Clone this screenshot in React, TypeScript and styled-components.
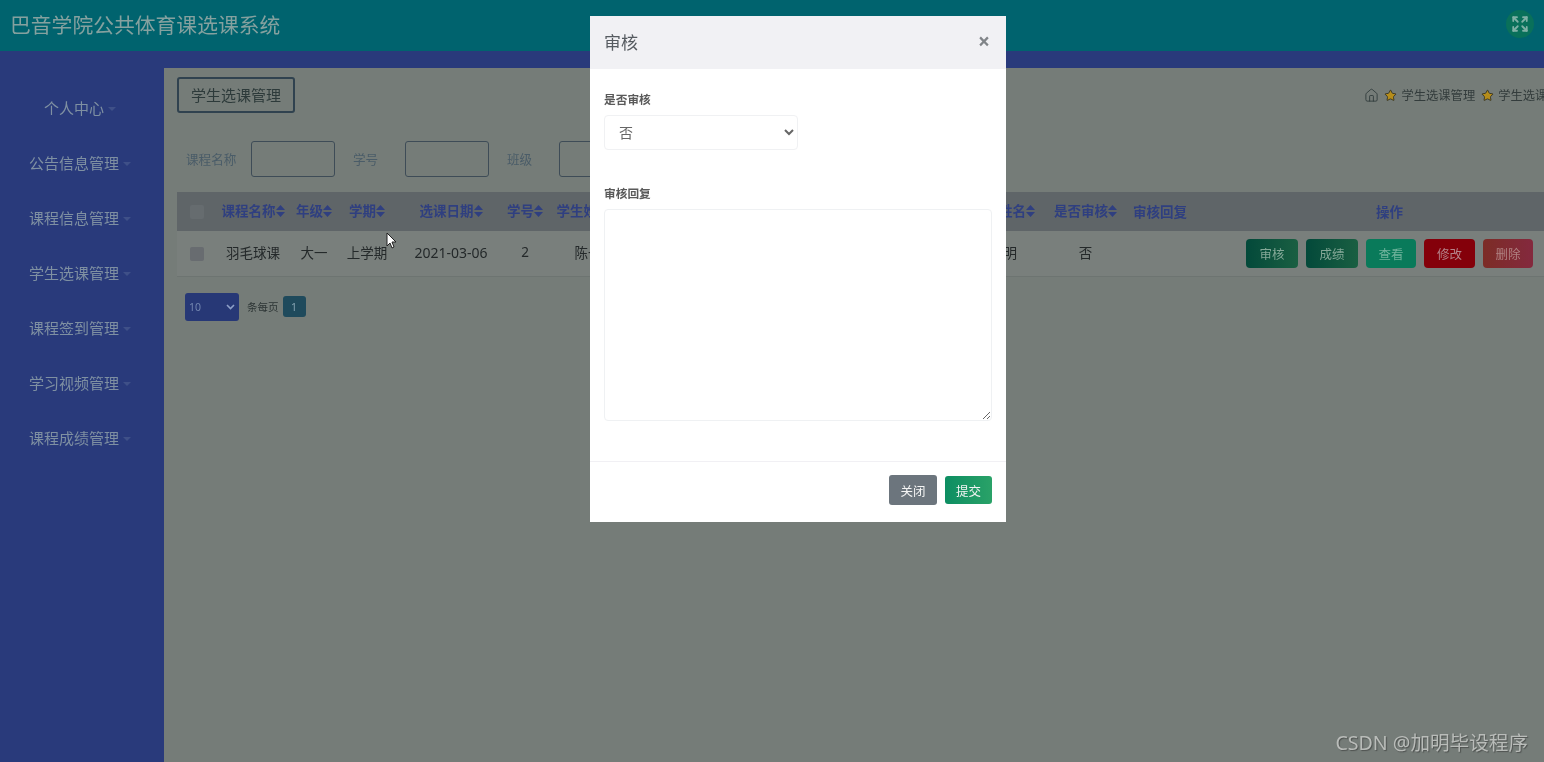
import React from "react";
import styled, { createGlobalStyle } from "styled-components";
import { Expand, House, Star } from "lucide-react";

const Global = createGlobalStyle`
  html, body { margin: 0; padding: 0; height: 100%; overflow: hidden; }
  body { font-family: "Noto Sans", "Noto Sans CJK SC", sans-serif; background: #293a7b; }
  * { box-sizing: border-box; }
`;

const Page = styled.div`
  position: relative;
  width: 1544px;
  height: 762px;
  overflow: hidden;
  display: flex;
  flex-direction: column;
  background: #293a7b;
  filter: blur(0.35px);
`;

const Header = styled.header`
  flex: 0 0 51px;
  display: flex;
  align-items: center;
  justify-content: space-between;
  padding: 0 10px 4px;
  background: #00636e;
`;

const Brand = styled.h1`
  margin: 0;
  font-size: 20.8px;
  font-weight: 400;
  color: #85a19f;
`;

const FullBtn = styled.div`
  width: 28px;
  height: 28px;
  border-radius: 50%;
  background: #09705a;
  color: #7fb0a5;
  display: flex;
  align-items: center;
  justify-content: center;
`;

const Body = styled.div`
  flex: 1;
  display: flex;
  min-height: 0;
`;

const Sidebar = styled.nav`
  flex: 0 0 164px;
  padding: 29px 4px 0 0;
  display: flex;
  flex-direction: column;
`;

const NavItem = styled.div`
  height: 55px;
  display: flex;
  align-items: center;
  justify-content: center;
  gap: 4px;
  font-size: 15px;
  color: #7f90a2;
`;

const Caret = styled.span`
  width: 0;
  height: 0;
  margin-top: 2px;
  border-left: 4px solid transparent;
  border-right: 4px solid transparent;
  border-top: 4px solid #3f5088;
`;

const Main = styled.main`
  flex: 1;
  min-width: 0;
  margin-top: 17px;
  padding: 9px 0 0 13px;
  background: #757c78;
  overflow: hidden;
`;

const Inner = styled.div`
  width: 1408px;
`;

const TitleRow = styled.div`
  display: flex;
  align-items: center;
  justify-content: space-between;
  padding-right: 7px;
`;

const TitleTag = styled.div`
  width: 118px;
  height: 36px;
  padding-bottom: 2px;
  border: 2px solid #30424f;
  border-radius: 3px;
  display: flex;
  align-items: center;
  justify-content: center;
  font-size: 15px;
  color: #2d3a3a;
`;

const Crumbs = styled.div`
  display: flex;
  align-items: center;
  font-size: 12.3px;
  color: #333c3c;
`;

const HomeIcon = styled(House)`
  margin-right: 5px;
  color: #2f3a3a;
`;

const CrumbStar = styled(Star)`
  margin-right: 4px;
  color: #2b2a1c;
  fill: #b58d1b;
`;

const CrumbText = styled.span`
  margin-right: 6px;
`;

const SearchRow = styled.div`
  display: flex;
  align-items: center;
  gap: 18px;
  margin-top: 28px;
  padding-left: 9px;
`;

const Field = styled.div`
  display: flex;
  align-items: center;
`;

const SearchLabel = styled.label<{ $w: number }>`
  width: ${(p) => p.$w}px;
  padding-bottom: 2px;
  font-size: 12.6px;
  color: #4a5c68;
`;

const SearchInput = styled.input`
  width: 84px;
  height: 36px;
  border: 1.5px solid #3e4c57;
  border-radius: 3px;
  background: transparent;
  outline: none;
`;

const Table = styled.table`
  width: 1408px;
  margin-top: 15px;
  table-layout: fixed;
  border-collapse: collapse;
`;

const Th = styled.th`
  height: 39px;
  padding: 0 0 2px;
  background: #5f6568;
  font-size: 13.5px;
  font-weight: 700;
  color: #2f3f80;
  white-space: nowrap;
`;

const SortMark = styled.span`
  display: inline-block;
  vertical-align: middle;
`;

const Td = styled.td<{ $wide?: boolean }>`
  height: 45px;
  padding: 0 0 2px;
  background: #797f7c;
  border-bottom: 1px solid #6d7471;
  text-align: center;
  font-size: ${(p) => (p.$wide ? 14 : 13.5)}px;
  color: #24292a;
  white-space: nowrap;
`;

const Check = styled.span<{ $dim?: boolean }>`
  display: inline-block;
  width: 14px;
  height: 14px;
  border-radius: 2px;
  background: ${(p) => (p.$dim ? "#666c6f" : "#686c70")};
  vertical-align: middle;
`;

const Actions = styled.div`
  display: flex;
  justify-content: center;
  gap: 8px;
  padding-top: 3px;
`;

const ActionBtn = styled.button<{ $bg: string; $w: number; $fg: string }>`
  width: ${(p) => p.$w}px;
  height: 29px;
  border: 0;
  border-radius: 4px;
  padding: 0;
  background: ${(p) => p.$bg};
  color: ${(p) => p.$fg};
  font-family: inherit;
  font-size: 12.5px;
`;

const Pager = styled.div`
  display: flex;
  align-items: center;
  margin: 16px 0 0 8px;
`;

const SizeSelect = styled.div`
  width: 54px;
  height: 28px;
  padding: 0 4px;
  border-radius: 3px;
  background: #273876;
  color: #7386b0;
  font-size: 10.5px;
  display: flex;
  align-items: center;
  justify-content: space-between;
`;

const PagerText = styled.span`
  margin: 0 4px 0 8px;
  font-size: 10.5px;
  color: #2d3535;
`;

const PageNum = styled.span`
  width: 23px;
  height: 21px;
  border-radius: 3px;
  background: #1f4a5c;
  color: #85a3b2;
  font-size: 10.5px;
  display: flex;
  align-items: center;
  justify-content: center;
`;

const Modal = styled.section`
  position: absolute;
  left: 590px;
  top: 16px;
  width: 416px;
  height: 506px;
  background: #fff;
  display: flex;
  flex-direction: column;
`;

const ModalHead = styled.div`
  flex: 0 0 53px;
  padding: 0 16px 0 14px;
  background: #f1f1f4;
  display: flex;
  align-items: center;
  justify-content: space-between;
`;

const ModalTitle = styled.h2`
  margin: -2px 0 0;
  font-size: 17px;
  font-weight: 400;
  color: #565b60;
`;

const CloseX = styled.span`
  font-size: 21px;
  line-height: 1;
  font-weight: 700;
  color: #808488;
  margin-top: -3px;
`;

const ModalBody = styled.div`
  flex: 1;
  padding: 22px 14px 0;
  display: flex;
  flex-direction: column;
`;

const FormLabel = styled.label`
  height: 18px;
  margin-bottom: 6px;
  font-size: 11.7px;
  font-weight: 700;
  line-height: 17px;
  color: #5a5a5a;
`;

const FormSelect = styled.select`
  width: 194px;
  height: 35px;
  margin-bottom: 35px;
  padding-left: 10px;
  border: 1px solid #f0f1f3;
  border-radius: 4px;
  background: #fff;
  font-family: inherit;
  font-size: 14px;
  color: #666;
  outline: none;
`;

const FormArea = styled.textarea`
  width: 388px;
  height: 212px;
  border: 1px solid #eff1f3;
  border-radius: 4px;
  outline: none;
`;

const ModalFoot = styled.div`
  flex: 0 0 61px;
  padding: 0 14px 4px 0;
  border-top: 1px solid #f1f0f4;
  display: flex;
  align-items: center;
  justify-content: flex-end;
  gap: 8px;
`;

const FootBtn = styled.button<{ $bg: string; $w: number; $h: number }>`
  width: ${(p) => p.$w}px;
  height: ${(p) => p.$h}px;
  border: 0;
  border-radius: 3px;
  padding: 0;
  background: ${(p) => p.$bg};
  color: #f4f4f4;
  font-family: inherit;
  font-size: 12.5px;
`;

const Pointer = styled.svg`
  position: absolute;
  left: 386px;
  top: 232px;
`;

const Watermark = styled.div`
  position: absolute;
  right: 16px;
  top: 729px;
  font-size: 19.6px;
  line-height: 27px;
  color: #b9bcb9;
  text-shadow: 1px 1px 1px rgba(40, 40, 40, 0.5);
`;

const menu = ["个人中心", "公告信息管理", "课程信息管理", "学生选课管理", "课程签到管理", "学习视频管理", "课程成绩管理"];

const columns: { label: string; width: number; sort: boolean }[] = [
  { label: "课程名称", width: 74, sort: true },
  { label: "年级", width: 48, sort: true },
  { label: "学期", width: 58, sort: true },
  { label: "选课日期", width: 110, sort: true },
  { label: "学号", width: 38, sort: true },
  { label: "学生姓名", width: 88, sort: true },
  { label: "手机号码", width: 110, sort: true },
  { label: "班级", width: 110, sort: true },
  { label: "教师工号", width: 110, sort: true },
  { label: "教师姓名", width: 83, sort: true },
  { label: "是否审核", width: 81, sort: true },
  { label: "审核回复", width: 68, sort: false },
  { label: "操作", width: 391, sort: false },
];

const cells = ["羽毛球课", "大一", "上学期", "2021-03-06", "2", "陈一", "13800000000", "一班", "1", "李明", "否", ""];

const buttons = [
  { t: "审核", w: 52, bg: "linear-gradient(90deg,#03493a,#1a5f42)", fg: "#84a897" },
  { t: "成绩", w: 52, bg: "linear-gradient(90deg,#03493a,#1a5f42)", fg: "#84a897" },
  { t: "查看", w: 50, bg: "#097a5a", fg: "#70b39c" },
  { t: "修改", w: 51, bg: "#84000a", fg: "#b5838a" },
  { t: "删除", w: 50, bg: "linear-gradient(90deg,#7c2c26,#84293e)", fg: "#b08282" },
];

const Sort = () => (
  <SortMark>
    <svg width="9" height="12" viewBox="0 0 9 12" fill="#2f3f80">
      <path d="M4.5 0 9 5H0zM4.5 12 0 7h9z" />
    </svg>
  </SortMark>
);

export default function App() {
  return (
    <Page>
      <Global />
      <Header>
        <Brand>巴音学院公共体育课选课系统</Brand>
        <FullBtn>
          <Expand size={18} strokeWidth={2.4} />
        </FullBtn>
      </Header>
      <Body>
        <Sidebar>
          {menu.map((m) => (
            <NavItem key={m}>
              {m}
              <Caret />
            </NavItem>
          ))}
        </Sidebar>
        <Main>
          <Inner>
            <TitleRow>
              <TitleTag>学生选课管理</TitleTag>
              <Crumbs>
                <HomeIcon size={15} strokeWidth={1.4} />
                <CrumbStar size={13} strokeWidth={1.5} />
                <CrumbText>学生选课管理</CrumbText>
                <CrumbStar size={13} strokeWidth={1.5} />
                <CrumbText>学生选课管理</CrumbText>
              </Crumbs>
            </TitleRow>
            <SearchRow>
              <Field>
                <SearchLabel $w={65}>课程名称</SearchLabel>
                <SearchInput />
              </Field>
              <Field>
                <SearchLabel $w={52}>学号</SearchLabel>
                <SearchInput />
              </Field>
              <Field>
                <SearchLabel $w={52}>班级</SearchLabel>
                <SearchInput />
              </Field>
            </SearchRow>
            <Table>
              <colgroup>
                <col style={{ width: 39 }} />
                {columns.map((c) => (
                  <col key={c.label} style={{ width: c.width }} />
                ))}
              </colgroup>
              <thead>
                <tr>
                  <Th>
                    <Check $dim />
                  </Th>
                  {columns.map((c) => (
                    <Th key={c.label}>
                      {c.label}
                      {c.sort && <Sort />}
                    </Th>
                  ))}
                </tr>
              </thead>
              <tbody>
                <tr>
                  <Td>
                    <Check />
                  </Td>
                  {cells.map((c, i) => (
                    <Td key={i} $wide={i === 3}>{c}</Td>
                  ))}
                  <Td>
                    <Actions>
                      {buttons.map((b) => (
                        <ActionBtn key={b.t} $bg={b.bg} $w={b.w} $fg={b.fg}>
                          {b.t}
                        </ActionBtn>
                      ))}
                    </Actions>
                  </Td>
                </tr>
              </tbody>
            </Table>
            <Pager>
              <SizeSelect>
                10
                <svg width="9" height="6" viewBox="0 0 9 6" fill="none" stroke="#8ea0c8" strokeWidth="1.6">
                  <path d="M1 1l3.5 3.5L8 1" />
                </svg>
              </SizeSelect>
              <PagerText>条每页</PagerText>
              <PageNum>1</PageNum>
            </Pager>
          </Inner>
        </Main>
      </Body>
      <Pointer width="12" height="17" viewBox="0 0 12 17">
        <path d="M1 1v13l3-3 2 5 2-1-2-5h4z" fill="#fff" stroke="#222" strokeWidth="1" />
      </Pointer>
      <Modal>
        <ModalHead>
          <ModalTitle>审核</ModalTitle>
          <CloseX>×</CloseX>
        </ModalHead>
        <ModalBody>
          <FormLabel>是否审核</FormLabel>
          <FormSelect defaultValue="否">
            <option>否</option>
            <option>是</option>
          </FormSelect>
          <FormLabel>审核回复</FormLabel>
          <FormArea />
        </ModalBody>
        <ModalFoot>
          <FootBtn $bg="#6c757d" $w={48} $h={30}>关闭</FootBtn>
          <FootBtn $bg="linear-gradient(90deg,#0d8e62,#2aa268)" $w={47} $h={28}>提交</FootBtn>
        </ModalFoot>
      </Modal>
      <Watermark>CSDN @加明毕设程序</Watermark>
    </Page>
  );
}
